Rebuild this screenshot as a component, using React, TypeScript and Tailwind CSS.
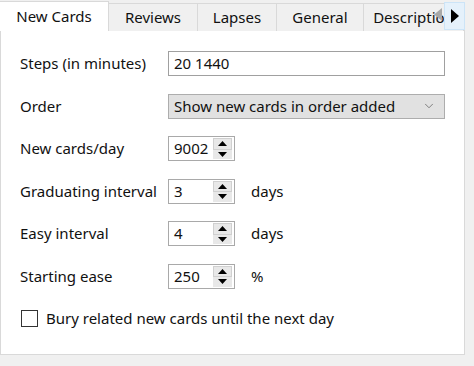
import { ChevronDown } from 'lucide-react'

const tabs = [
  { label: 'Reviews', w: 'w-[89px]' },
  { label: 'Lapses', w: 'w-[79px]' },
  { label: 'General', w: 'w-[87px]' },
  { label: 'Description', w: 'w-[100px]' },
]

const SpinBox = ({ value }: { value: string }) => (
  <div className="flex h-[25px] w-[67px] items-stretch border border-[#a9a9a9] bg-white">
    <span className="flex-1 pl-[5px] leading-[23px]">{value}</span>
    <div className="my-[1px] mr-[2px] flex w-[19px] flex-col">
      <div className="flex flex-1 items-center justify-center border border-[#d0d0d0] bg-[#e8e8e8]">
        <svg width="9" height="5" viewBox="0 0 9 5">
          <path d="M0 5 L4.5 0 L9 5 Z" fill="#000" />
        </svg>
      </div>
      <div className="flex flex-1 items-center justify-center bg-[#e8e8e8]">
        <svg width="9" height="5" viewBox="0 0 9 5">
          <path d="M0 0 L4.5 5 L9 0 Z" fill="#000" />
        </svg>
      </div>
    </div>
  </div>
)

const Row = ({ label, children }: { label: string; children: React.ReactNode }) => (
  <div className="flex h-[25px] items-center">
    <span className="w-[148px] shrink-0">{label}</span>
    {children}
  </div>
)

export default function App() {
  return (
    <div className="relative h-[366px] w-[474px] overflow-hidden bg-[#f0f0f0] font-['Noto_Sans',sans-serif] text-[15px] text-[#111]">
      <div className="flex h-[31px] items-end">
        <div className="relative z-10 flex h-[30px] w-[109px] items-center justify-center border-r border-t border-[#d9d9d9] bg-white">
          New Cards
        </div>
        {tabs.map((t) => (
          <div
            key={t.label}
            className={`flex h-[28px] shrink-0 items-center justify-center border-r border-t border-[#d9d9d9] bg-[#f0f0f0] ${t.w}`}
          >
            {t.label}
          </div>
        ))}
      </div>

      {/* tab scroll arrows */}
      <div className="absolute left-[434px] top-[8px]">
        <svg width="8" height="13" viewBox="0 0 8 13">
          <path d="M8 0 L8 13 L0 6.5 Z" fill="#a8a8a8" />
        </svg>
      </div>
      <div className="absolute left-[444px] top-[2px] flex h-[28px] w-[21px] items-center justify-center border border-[#cce4f7] bg-[#e5f1fb]">
        <svg width="8" height="14" viewBox="0 0 8 14">
          <path d="M0 0 L8 7 L0 14 Z" fill="#000" />
        </svg>
      </div>

      <div className="-mt-px h-[325px] w-[465px] border border-[#d9d9d9] bg-white pl-[19px] pt-[20px]">
        <div className="flex flex-col gap-[17.5px]">
          <Row label="Steps (in minutes)">
            <div className="h-[25px] w-[277px] border border-[#a0a0a0] pl-[5px] leading-[23px]">20 1440</div>
          </Row>
          <Row label="Order">
            <div className="flex h-[25px] w-[277px] items-center justify-between border border-[#adadad] bg-[#e1e1e1] pl-[5px] pr-[8px]">
              <span>Show new cards in order added</span>
              <ChevronDown size={14} strokeWidth={1.2} className="text-[#555]" />
            </div>
          </Row>
          <Row label="New cards/day">
            <SpinBox value="9002" />
          </Row>
          <Row label="Graduating interval">
            <SpinBox value="3" />
            <span className="ml-[16px]">days</span>
          </Row>
          <Row label="Easy interval">
            <SpinBox value="4" />
            <span className="ml-[16px]">days</span>
          </Row>
          <Row label="Starting ease">
            <SpinBox value="250" />
            <span className="ml-[16px]">%</span>
          </Row>
          <div className="flex h-[25px] items-center">
            <div className="ml-[1px] h-[17px] w-[17px] border border-[#333] bg-white" />
            <span className="ml-[8px]">Bury related new cards until the next day</span>
          </div>
        </div>
      </div>
    </div>
  )
}
